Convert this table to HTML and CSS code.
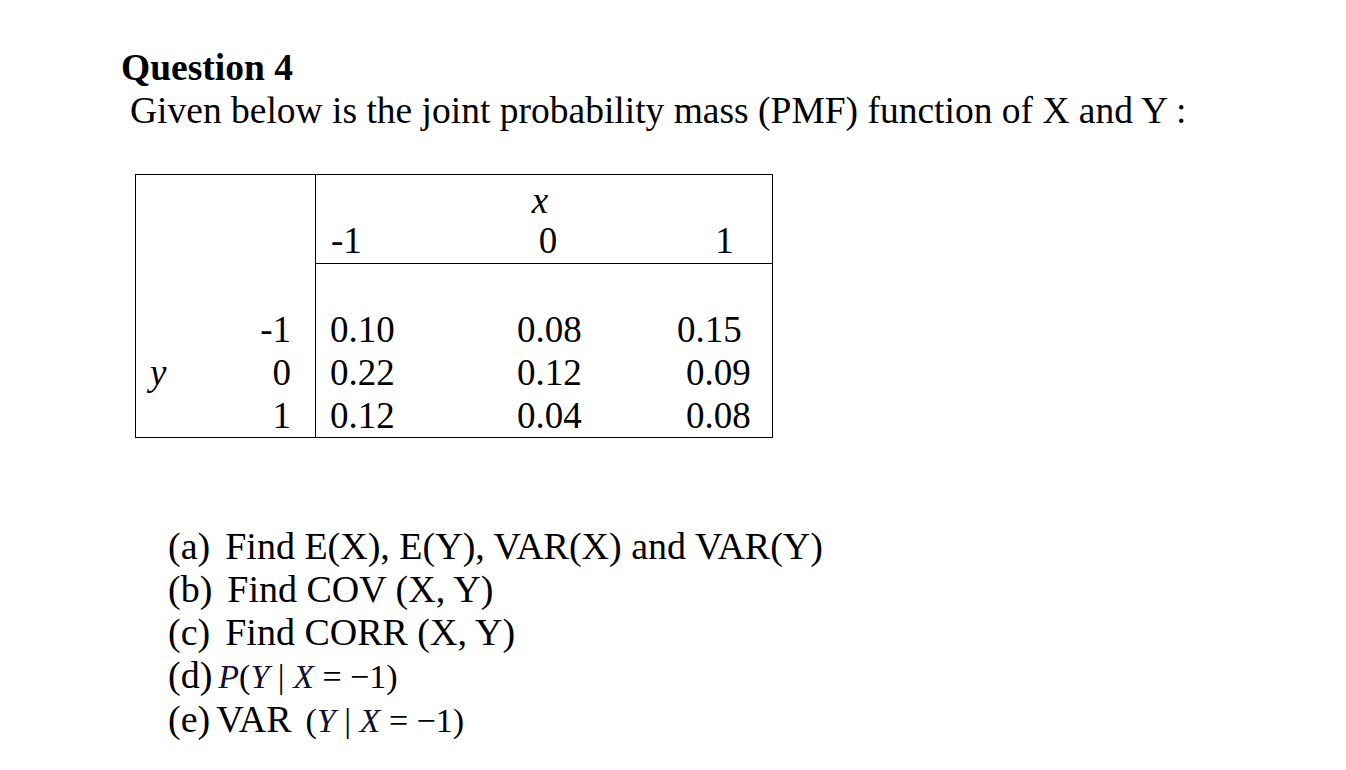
FILE: index.html
```html
<!DOCTYPE html>
<html lang="en">
<head>
    <meta charset="UTF-8">
    <meta name="viewport" content="width=device-width, initial-scale=1.0">
    <title>Question 4</title>
    <link rel="stylesheet" href="styles.css">
</head>
<body>
    <div class="page">
        <h1 class="title">Question 4</h1>
        <p class="intro">Given below is the joint probability mass (PMF) function of X and Y :</p>

        <div class="pmf">
            <div class="ycol">
                <div class="ylabel">y</div>
                <div class="ynums">
                    <span>-1</span>
                    <span>0</span>
                    <span>1</span>
                </div>
            </div>
            <div class="xcol">
                <div class="xhead">
                    <div class="xlabel">x</div>
                    <div class="xvals">
                        <span>-1</span>
                        <span class="mid">0</span>
                        <span class="end">1</span>
                    </div>
                </div>
                <div class="cells">
                    <div class="row"><span>0.10</span><span>0.08</span><span>0.15</span></div>
                    <div class="row"><span>0.22</span><span>0.12</span><span class="shift">0.09</span></div>
                    <div class="row"><span>0.12</span><span>0.04</span><span class="shift">0.08</span></div>
                </div>
            </div>
        </div>

        <ol class="parts">
            <li><span class="tag">(a)</span>Find E(X), E(Y), VAR(X) and VAR(Y)</li>
            <li><span class="tag">(b)</span>Find COV (X, Y)</li>
            <li><span class="tag">(c)</span>Find CORR (X, Y)</li>
            <li class="math-line"><span class="tag short">(d)</span><span class="math"><i>P</i>(<i>Y</i> | <i>X</i> = &minus;1)</span></li>
            <li class="math-line"><span class="tag short">(e)</span>VAR<span class="math after">(<i>Y</i> | <i>X</i> = &minus;1)</span></li>
        </ol>
    </div>
</body>
</html>
```

FILE: styles.css
```css
* {
    box-sizing: border-box;
}

body {
    margin: 0;
    background-color: #fff;
    color: #000;
    font-family: "Liberation Serif", "Times New Roman", serif;
}

.page {
    padding: 47px 0 0 121px;
}

.title {
    margin: 0;
    font-size: 37.5px;
    font-weight: bold;
    line-height: 42px;
}

.intro {
    margin: 0 0 0 9px;
    font-size: 37.5px;
    line-height: 44px;
}

.pmf {
    display: flex;
    width: 638px;
    height: 264px;
    margin: 41px 0 0 14px;
    border: 1px solid #000;
    font-size: 37px;
}

.ycol {
    display: flex;
    width: 180px;
    border-right: 1px solid #000;
    padding: 133px 24px 0 14px;
}

.ylabel {
    font-style: italic;
    padding-top: 43px;
    line-height: 43px;
}

.ynums {
    flex: 1;
    display: flex;
    flex-direction: column;
    align-items: flex-end;
    line-height: 43px;
}

.xcol {
    flex: 1;
    display: flex;
    flex-direction: column;
}

.xhead {
    height: 89px;
    border-bottom: 1px solid #000;
    padding-top: 6px;
}

.xlabel {
    font-style: italic;
    text-align: center;
    line-height: 40px;
    padding-right: 8px;
}

.xvals {
    display: flex;
    line-height: 40px;
    padding-left: 15px;
}

.xvals .mid {
    margin-left: 177px;
}

.xvals .end {
    margin-left: 158px;
}

.cells {
    padding: 44px 0 0 14px;
}

.row {
    display: grid;
    grid-template-columns: 187px 160px 1fr;
    line-height: 43px;
}

.shift {
    padding-left: 9px;
}

.parts {
    list-style: none;
    margin: 87px 0 0 47px;
    padding: 0;
    font-size: 38px;
}

.parts li {
    line-height: 43px;
}

.tag {
    margin-right: 15px;
}

.tag.short {
    margin-right: 6px;
}

.math-line {
    line-height: 45px;
}

.math {
    font-size: 34px;
}

.math.after {
    margin-left: 14px;
}

.math i {
    color: #111133;
}
```
